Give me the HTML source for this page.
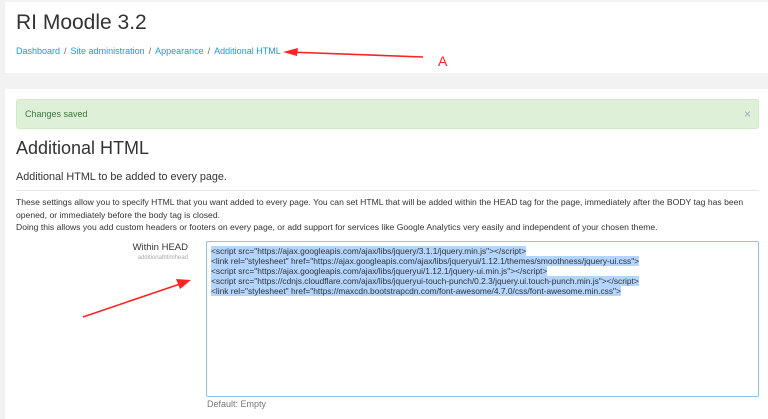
<!DOCTYPE html>
<html><head><meta charset="utf-8"><style>
*{margin:0;padding:0;box-sizing:border-box}
body{width:768px;height:412px;overflow:hidden;background:#f2f2f2;font-family:"Liberation Sans",sans-serif;position:relative;color:#373a3c}
.hdr{position:absolute;left:5px;top:2px;width:763px;height:71px;background:#fff}
.card{position:absolute;left:5px;top:89px;width:763px;height:330px;background:#fff}
.a{position:absolute;white-space:nowrap}
.bc{color:#1d9bd1;font-size:9px}
.bc span{color:#666;margin:0 4px}
.alert{position:absolute;left:16px;top:99px;width:743px;height:30px;background:#dff0d8;border:1px solid #d0e9c6;border-radius:3px}
.ta{position:absolute;left:206px;top:241px;width:553px;height:156px;border:1px solid #8fc1ec;border-radius:2px}
.sel{background:#b4d5fe;color:#333;font-size:8.4px;line-height:10px;display:inline-block}
</style></head><body>
<div class="hdr"></div>
<div class="a" style="left:16px;top:11px;font-size:21px;color:#333">RI Moodle 3.2</div>
<div class="a bc" style="left:16px;top:46px">Dashboard<span>/</span>Site administration<span>/</span>Appearance<span>/</span>Additional HTML</div>
<svg class="a" style="left:280px;top:45px" width="190" height="25"><line x1="8" y1="7" x2="143" y2="12" stroke="#f22" stroke-width="1.6"/><polygon points="3,7 18,3 17,11" fill="#f22"/><text x="158" y="21" fill="#f22" font-size="14" font-family="Liberation Sans">A</text></svg>
<div class="card"></div>
<div class="alert"></div>
<div class="a" style="left:25px;top:109px;font-size:9px;color:#3c763d">Changes saved</div>
<div class="a" style="left:744px;top:107px;font-size:12px;color:#9ab">×</div>
<div class="a" style="left:16px;top:138px;font-size:18px;color:#333">Additional HTML</div>
<div class="a" style="left:16px;top:171px;font-size:10.8px;color:#333">Additional HTML to be added to every page.</div>
<div class="a" style="left:16px;top:190px;width:743px;border-top:1px solid #e5e5e5"></div>
<div class="a" style="left:16px;top:196px;font-size:8.6px;line-height:12.5px;color:#333">These settings allow you to specify HTML that you want added to every page. You can set HTML that will be added within the HEAD tag for the page, immediately after the BODY tag has been<br>opened, or immediately before the body tag is closed.<br>Doing this allows you add custom headers or footers on every page, or add support for services like Google Analytics very easily and independent of your chosen theme.</div>
<div class="a" style="right:580px;top:242px;font-size:9.5px;color:#333">Within HEAD</div>
<div class="a" style="right:580px;top:255px;font-size:6px;color:#aaa">additionalhtmlhead</div>
<div class="ta"></div>
<div class="a" style="left:211px;top:246px;font-size:8.4px;line-height:10px"><span class="sel">&lt;script src="https://ajax.googleapis.com/ajax/libs/jquery/3.1.1/jquery.min.js"&gt;&lt;/script&gt;</span><br><span class="sel">&lt;link rel="stylesheet" href="https://ajax.googleapis.com/ajax/libs/jqueryui/1.12.1/themes/smoothness/jquery-ui.css"&gt;</span><br><span class="sel">&lt;script src="https://ajax.googleapis.com/ajax/libs/jqueryui/1.12.1/jquery-ui.min.js"&gt;&lt;/script&gt;</span><br><span class="sel">&lt;script src="https://cdnjs.cloudflare.com/ajax/libs/jqueryui-touch-punch/0.2.3/jquery.ui.touch-punch.min.js"&gt;&lt;/script&gt;</span><br><span class="sel">&lt;link rel="stylesheet" href="https://maxcdn.bootstrapcdn.com/font-awesome/4.7.0/css/font-awesome.min.css"&gt;</span></div>
<svg class="a" style="left:80px;top:275px" width="115" height="45"><line x1="3" y1="42" x2="100" y2="9" stroke="#f22" stroke-width="1.6"/><polygon points="111,5 96,4 100,14" fill="#f22"/></svg>
<div class="a" style="left:207px;top:399px;font-size:9px;color:#777">Default: Empty</div>
</body></html>
